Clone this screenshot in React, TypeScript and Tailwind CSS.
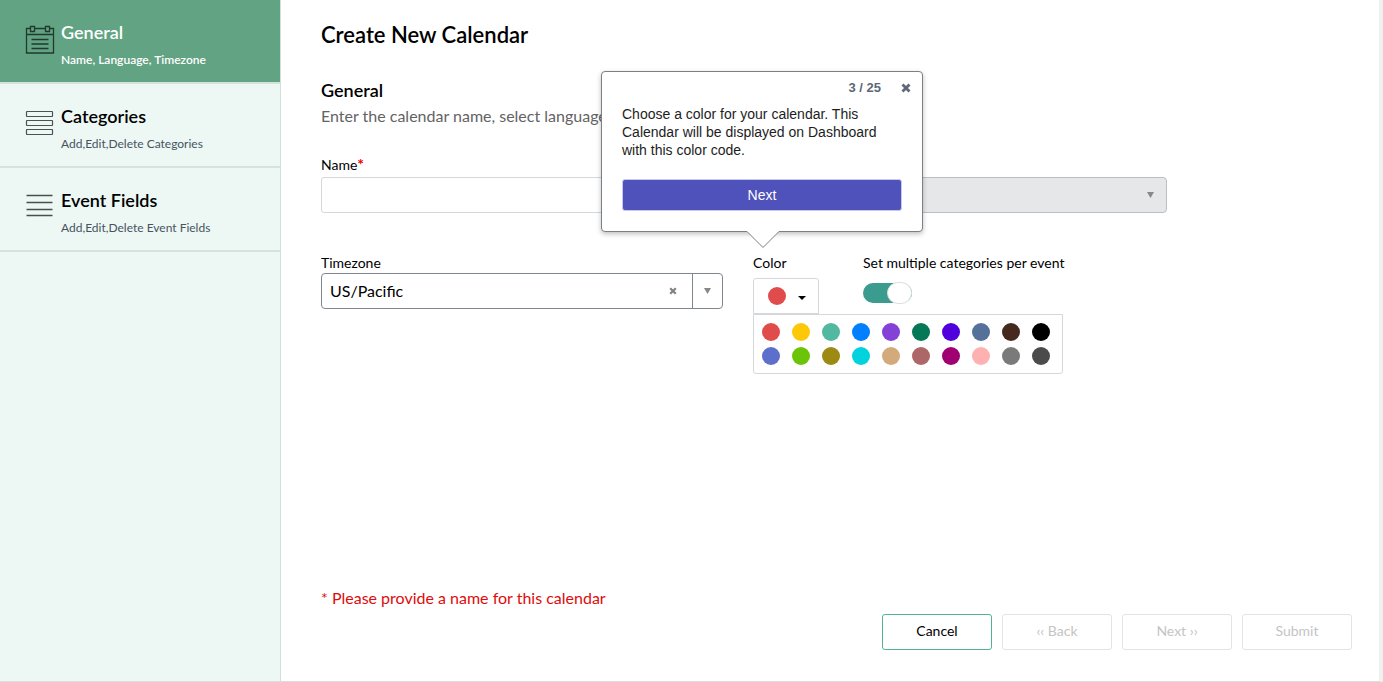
import { useState } from "react";
import type { ReactNode } from "react";

const COLORS = [
    "#e04c4c", "#fdc808", "#53b8a0", "#0080ff", "#8341d8", "#047857", "#4f00dc", "#557199", "#45291e", "#000000",
    "#5c6fcb", "#6cc409", "#9c8a13", "#00d2de", "#d2aa7c", "#ae6767", "#a00072", "#ffb0b0", "#7a7a7a", "#4b4b4b",
];

const CalendarIcon = () => (
    <svg width="30" height="30" viewBox="0 0 30 30" fill="none" stroke="#203a2d" strokeWidth="1.3" aria-hidden="true">
        <path d="M5.5 4.5H1.5V29H28.5V4.5H24.5M9.5 4.5H20.5M1.5 10.5H28.5" />
        <path d="M5.5 2.5H9.5V7.5H5.5ZM20.5 2.5H24.5V7.5H20.5Z" />
        <path d="M6.5 15.5H23.5M6.5 20H23.5M6.5 24.5H23.5" />
    </svg>
);

const CategoriesIcon = () => (
    <svg width="30" height="30" viewBox="0 0 30 30" fill="none" stroke="#4a5350" strokeWidth="1.2" aria-hidden="true">
        <rect x="1.5" y="3.5" width="26" height="5" rx="0.5" />
        <rect x="1.5" y="12.5" width="26" height="5" rx="0.5" />
        <rect x="1.5" y="21.5" width="26" height="5" rx="0.5" />
    </svg>
);

const FieldsIcon = () => (
    <svg width="30" height="30" viewBox="0 0 30 30" fill="none" stroke="#46504c" strokeWidth="1.3" aria-hidden="true">
        <path d="M1.5 3.5H27.5M1.5 10.5H27.5M1.5 17.5H27.5M1.5 23.5H27.5" />
    </svg>
);

const CrossIcon = ({ size }: { size: number }) => (
    <svg width={size} height={size} viewBox="0 0 10 10" stroke="currentColor" strokeWidth="2.8" aria-hidden="true">
        <path d="M1.5 1.5L8.5 8.5M8.5 1.5L1.5 8.5" />
    </svg>
);

const ArrowIcon = () => (
    <svg width="7" height="6" viewBox="0 0 7 6" fill="#888888" aria-hidden="true">
        <path d="M0 0H7L3.5 6Z" />
    </svg>
);

interface StepProps {
    icon: ReactNode;
    title: string;
    subtitle: string;
    active?: boolean;
}

const Step = ({ icon, title, subtitle, active }: StepProps) => (
    <li>
        <a
            href="#"
            className={`flex h-[84px] gap-[6px] border-b-2 border-[#d5e3dd] pt-6 pl-[25px] ${active ? "bg-[#62a383] text-white" : "text-black"}`}
        >
            {icon}
            <span className="-mt-1 flex flex-col">
                <span className="text-lg leading-6 font-semibold">{title}</span>
                <span className={`mt-2 text-xs leading-4 ${active ? "font-semibold" : "text-[#46545f]"}`}>{subtitle}</span>
            </span>
        </a>
    </li>
);

interface TourProps {
    step: number;
    total: number;
    onClose: () => void;
}

const TourPopover = ({ step, total, onClose }: TourProps) => (
    <div
        role="dialog"
        aria-label="Tour"
        className="absolute bottom-full -left-[152px] z-10 mb-[21px] w-[322px] rounded-[4px] border border-[#7b8087] bg-white px-5 pt-2 pb-5 font-['Liberation_Sans',sans-serif] text-sm text-[#1d1d1d] shadow-[0_2px_5px_rgba(0,0,0,0.25)]"
    >
        <div className="-mr-[10px] flex items-center justify-end gap-[19px] text-[#5d6778]">
            <span className="text-[13px] leading-4 font-bold">{step} / {total}</span>
            <button type="button" aria-label="Close" onClick={onClose} className="flex w-3 justify-center">
                <CrossIcon size={10} />
            </button>
        </div>
        <p className="mt-[9px] leading-[18px]">
            Choose a color for your calendar. This Calendar will be displayed on Dashboard with this color code.
        </p>
        <button type="button" className="mt-5 h-8 w-full rounded-[3px] border border-[#c9c9ec] bg-[#5052bc] text-white">
            Next
        </button>
        <svg className="absolute top-full left-36 -mt-px" width="34" height="19" viewBox="0 0 34 19" aria-hidden="true">
            <path d="M0 0H34V1.5H33L17 17.5L1 1.5H0Z" fill="white" />
            <path d="M0 1.5H1L17 17.5L33 1.5H34" fill="none" stroke="#7b8087" />
        </svg>
    </div>
);

const ColorPicker = () => {
    const [color, setColor] = useState(COLORS[0]);
    return (
        <div>
            <button
                type="button"
                aria-label="Calendar color"
                className="flex h-9 w-[66px] items-center gap-3 rounded-t-[3px] border border-[#d5d8da] pl-[14px]"
            >
                <span className="h-[18px] w-[18px] rounded-full" style={{ backgroundColor: color }} />
                <svg className="mt-1" width="8" height="4" viewBox="0 0 8 4" aria-hidden="true">
                    <path d="M0 0H8L4 4Z" fill="black" />
                </svg>
            </button>
            <div className="grid h-[60px] w-[310px] grid-cols-[repeat(10,30px)] content-start gap-y-[6px] rounded-b-[3px] border border-[#d5d8da] px-[2px] pt-2">
                {COLORS.map(c => (
                    <button
                        key={c}
                        type="button"
                        aria-label={c}
                        onClick={() => setColor(c)}
                        className="h-[18px] w-[18px] justify-self-center rounded-full"
                        style={{ backgroundColor: c }}
                    />
                ))}
            </div>
        </div>
    );
};

const Toggle = () => (
    <label className="block w-max">
        <span className="block text-sm leading-5 whitespace-nowrap">Set multiple categories per event</span>
        <input type="checkbox" role="switch" defaultChecked className="peer sr-only" />
        <span className="mt-[10px] flex h-5 w-[49px] items-center justify-start rounded-full bg-[#b9bdc0] peer-checked:justify-end peer-checked:bg-[#3b9b8e]">
            <span className="h-[22px] w-[25px] rounded-full border border-[#dcdfe0] bg-white" />
        </span>
    </label>
);

const FooterButton = ({ children, disabled }: { children: ReactNode; disabled?: boolean }) => (
    <button
        type="button"
        disabled={disabled}
        className={`h-9 w-[110px] rounded-[3px] border pb-[2px] text-sm ${disabled ? "border-[#e3e3e3] text-[#c4c4c4]" : "border-[#50b394] text-black"}`}
    >
        {children}
    </button>
);

export default function App() {
    const [name, setName] = useState("");
    const [timezone, setTimezone] = useState("US/Pacific");
    const [tour, setTour] = useState(true);

    return (
        <div className="flex min-h-screen border-r-4 border-b border-r-[#f0f0f0] border-b-[#dddddd] bg-white font-['Lato',sans-serif] text-black">
            <aside className="w-[281px] shrink-0 border-r border-[#d3dedb] bg-[#edf7f4]">
                <ul>
                    <Step icon={<CalendarIcon />} title="General" subtitle="Name, Language, Timezone" active />
                    <Step icon={<CategoriesIcon />} title="Categories" subtitle="Add,Edit,Delete Categories" />
                    <Step icon={<FieldsIcon />} title="Event Fields" subtitle="Add,Edit,Delete Event Fields" />
                </ul>
            </aside>

            <main className="flex min-w-0 flex-1 flex-col pt-5 pr-[27px] pb-[31px] pl-10">
                <h1 className="text-[22px] leading-[30px] font-semibold">Create New Calendar</h1>
                <h2 className="mt-7 text-lg leading-6 font-semibold">General</h2>
                <p className="mt-[3px] text-base leading-[22px] text-[#636363]">Enter the calendar name, select language</p>

                <div className="mt-7 mr-[13px] grid grid-cols-[402fr_414fr_142fr] gap-x-[30px] gap-y-10">
                    <div>
                        <label htmlFor="name" className="block text-sm leading-5">
                            Name<span className="text-base leading-4 font-bold text-[#f00000]">*</span>
                        </label>
                        <input
                            id="name"
                            value={name}
                            onChange={e => setName(e.target.value)}
                            className="mt-[2px] block h-9 w-full rounded-[3px] border border-[#d5d8da] px-2"
                        />
                    </div>
                    <div className="flex items-end">
                        <div className="flex h-9 w-full items-center rounded-[4px] border border-[#bbbfc2] bg-[#e5e7e9] pr-3">
                            <select disabled aria-label="Language" className="h-full flex-1 appearance-none" />
                            <ArrowIcon />
                        </div>
                    </div>
                    <div />

                    <div>
                        <label htmlFor="timezone" className="block text-sm leading-5">Timezone</label>
                        <div className="flex h-9 items-center rounded-[4px] border border-[#80868d]">
                            <select
                                id="timezone"
                                value={timezone}
                                onChange={e => setTimezone(e.target.value)}
                                className="h-full flex-1 appearance-none pl-2 text-base"
                            >
                                <option value="" />
                                <option>US/Pacific</option>
                            </select>
                            <button type="button" aria-label="Clear timezone" onClick={() => setTimezone("")} className="mr-[15px] text-[#828282]">
                                <CrossIcon size={8} />
                            </button>
                            <span className="flex h-full w-[30px] items-center justify-center border-l border-[#80868d]">
                                <ArrowIcon />
                            </span>
                        </div>
                    </div>
                    <div className="flex gap-11">
                        <div className="relative w-[66px]">
                            {tour && <TourPopover step={3} total={25} onClose={() => setTour(false)} />}
                            <div className="mb-[5px] text-sm leading-5">Color</div>
                            <ColorPicker />
                        </div>
                        <Toggle />
                    </div>
                </div>

                <p className="mt-auto text-base leading-6 text-[#e00b0b]">* Please provide a name for this calendar</p>
                <div className="mt-1 flex justify-end gap-[10px]">
                    <FooterButton>Cancel</FooterButton>
                    <FooterButton disabled>‹‹ Back</FooterButton>
                    <FooterButton disabled>Next ››</FooterButton>
                    <FooterButton disabled>Submit</FooterButton>
                </div>
            </main>
        </div>
    );
}
